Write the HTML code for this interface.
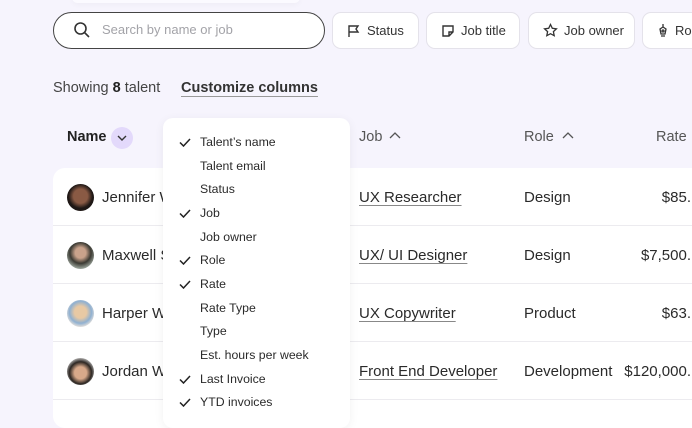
<!DOCTYPE html>
<html><head><style>
*{margin:0;padding:0;box-sizing:border-box}
body{width:692px;height:416px;overflow:hidden;background:#f6f4fd;font-family:"Liberation Sans",sans-serif;color:#2a2a2a;position:relative}
.a{position:absolute;white-space:nowrap}
.btn{position:absolute;top:12px;height:37px;background:#fff;border:1px solid #e4e2ea;border-radius:9px;font-size:13px;display:flex;align-items:center;gap:6px;padding-left:14px;color:#333}
.row{position:absolute;left:53px;width:700px;height:58px;border-bottom:1px solid #ecebef;font-size:15px}
.av{position:absolute;left:14px;top:16px;width:27px;height:27px;border-radius:50%}
.nm{position:absolute;left:49px;top:21px}
.job{position:absolute;left:306px;top:21px;text-decoration:underline;text-decoration-color:#888;text-underline-offset:3px}
.role{position:absolute;left:471px;top:21px}
.rate{position:absolute;right:62px;top:21px}
.dd{position:absolute;left:163px;top:118px;width:187px;height:310px;background:#fff;border-radius:10px;box-shadow:0 2px 10px rgba(0,0,0,.06)}
.it{position:absolute;left:37px;font-size:12.3px;color:#2a2a2a}
.ck{position:absolute;left:16px;width:12px;height:9px}
</style></head><body>
<div class="a" style="left:72px;top:-8px;width:228px;height:11px;background:#fbfaff;border-radius:8px;box-shadow:0 2px 6px rgba(0,0,0,.03)"></div>
<div class="a" style="left:53px;top:12px;width:272px;height:37px;background:#fff;border:1.3px solid #444;border-radius:19px"></div>
<svg class="a" style="left:73px;top:21px" width="18" height="18" viewBox="0 0 18 18" fill="none" stroke="#333" stroke-width="1.6"><circle cx="7.5" cy="7.5" r="5.5"/><path d="M11.5 11.5l4.5 4.5"/></svg>
<div class="a" style="left:102px;top:22px;font-size:13px;color:#a3a3a8">Search by name or job</div>
<div class="btn" style="left:332px;width:87px"><svg width="14" height="14" viewBox="0 0 14 14" fill="none" stroke="#333" stroke-width="1.4"><path d="M2 13V2h9l-2 3 2 3H2"/></svg>Status</div>
<div class="btn" style="left:426px;width:94px"><svg width="14" height="14" viewBox="0 0 14 14" fill="none" stroke="#333" stroke-width="1.4"><path d="M2 2h10v6l-4 4H2z M8 12V8h4"/></svg>Job title</div>
<div class="btn" style="left:528px;width:107px"><svg width="15" height="15" viewBox="0 0 15 15" fill="none" stroke="#333" stroke-width="1.3"><path d="M7.5 1.5l1.8 3.8 4.1.5-3 2.8.8 4.1-3.7-2-3.7 2 .8-4.1-3-2.8 4.1-.5z"/></svg>Job owner</div>
<div class="btn" style="left:642px;width:80px"><svg width="12" height="15" viewBox="0 0 12 15" fill="none" stroke="#333" stroke-width="1.3"><path d="M6 1v3M3 6l3-2 3 2-1 5H4z M4 13h4"/><circle cx="6" cy="8" r="1"/></svg>Ro</div>
<div class="a" style="left:53px;top:80px;font-size:14.5px;color:#444">Showing <b style="color:#222">8</b> talent</div>
<div class="a" style="left:181px;top:80px;font-size:14.5px;font-weight:bold;color:#333;text-decoration:underline;text-decoration-color:#999;text-underline-offset:4px">Customize columns</div>
<div class="a" style="left:67px;top:129px;font-size:14.5px;font-weight:bold;color:#222">Name</div>
<div class="a" style="left:111px;top:127px;width:22px;height:22px;border-radius:50%;background:#e3d9fb"></div>
<svg class="a" style="left:116px;top:134px" width="12" height="8" viewBox="0 0 12 8" fill="none" stroke="#333" stroke-width="1.4"><path d="M2 2l4 4 4-4"/></svg>
<div class="a" style="left:359px;top:129px;font-size:14.5px;color:#555">Job</div>
<svg class="a" style="left:388px;top:130px" width="14" height="10" viewBox="0 0 14 10" fill="none" stroke="#555" stroke-width="1.3"><path d="M2 8l5-5 5 5"/></svg>
<div class="a" style="left:524px;top:129px;font-size:14.5px;color:#555">Role</div>
<svg class="a" style="left:561px;top:130px" width="14" height="10" viewBox="0 0 14 10" fill="none" stroke="#555" stroke-width="1.3"><path d="M2 8l5-5 5 5"/></svg>
<div class="a" style="left:656px;top:129px;font-size:14.5px;color:#555">Rate</div>
<div class="a" style="left:53px;top:168px;width:700px;height:260px;background:#fff;border-radius:12px"></div>
<div class="row" style="top:168px"><div class="av" style="background:radial-gradient(circle at 50% 45%,#8a5a44 35%,#1e1715 60%)"></div><div class="nm">Jennifer W</div><div class="job">UX Researcher</div><div class="role">Design</div><div class="rate">$85.</div></div>
<div class="row" style="top:226px"><div class="av" style="background:radial-gradient(circle at 50% 40%,#c9a28b 25%,#3b3a33 50%,#9aa39a 75%)"></div><div class="nm">Maxwell S</div><div class="job">UX/ UI Designer</div><div class="role">Design</div><div class="rate">$7,500.</div></div>
<div class="row" style="top:284px"><div class="av" style="background:radial-gradient(circle at 50% 45%,#e8c9a4 30%,#8fb0d1 55%,#e8e2dc 75%)"></div><div class="nm">Harper W</div><div class="job">UX Copywriter</div><div class="role">Product</div><div class="rate">$63.</div></div>
<div class="row" style="top:342px"><div class="av" style="background:radial-gradient(circle at 50% 55%,#d8a98a 30%,#2c2622 55%,#d9d9d9 80%)"></div><div class="nm">Jordan W</div><div class="job">Front End Developer</div><div class="role">Development</div><div class="rate">$120,000.</div></div>
<div class="dd">
<svg class="ck" style="top:20px" viewBox="0 0 12 9" fill="none" stroke="#222" stroke-width="1.5"><path d="M1 4.5l3.5 3.5L11 1"/></svg><div class="it" style="top:17px">Talent’s name</div>
<div class="it" style="top:41px">Talent email</div>
<div class="it" style="top:64px">Status</div>
<svg class="ck" style="top:91px" viewBox="0 0 12 9" fill="none" stroke="#222" stroke-width="1.5"><path d="M1 4.5l3.5 3.5L11 1"/></svg><div class="it" style="top:88px">Job</div>
<div class="it" style="top:112px">Job owner</div>
<svg class="ck" style="top:138px" viewBox="0 0 12 9" fill="none" stroke="#222" stroke-width="1.5"><path d="M1 4.5l3.5 3.5L11 1"/></svg><div class="it" style="top:135px">Role</div>
<svg class="ck" style="top:162px" viewBox="0 0 12 9" fill="none" stroke="#222" stroke-width="1.5"><path d="M1 4.5l3.5 3.5L11 1"/></svg><div class="it" style="top:159px">Rate</div>
<div class="it" style="top:183px">Rate Type</div>
<div class="it" style="top:206px">Type</div>
<div class="it" style="top:230px">Est. hours per week</div>
<svg class="ck" style="top:257px" viewBox="0 0 12 9" fill="none" stroke="#222" stroke-width="1.5"><path d="M1 4.5l3.5 3.5L11 1"/></svg><div class="it" style="top:254px">Last Invoice</div>
<svg class="ck" style="top:280px" viewBox="0 0 12 9" fill="none" stroke="#222" stroke-width="1.5"><path d="M1 4.5l3.5 3.5L11 1"/></svg><div class="it" style="top:277px">YTD invoices</div>
</div>
</body></html>
